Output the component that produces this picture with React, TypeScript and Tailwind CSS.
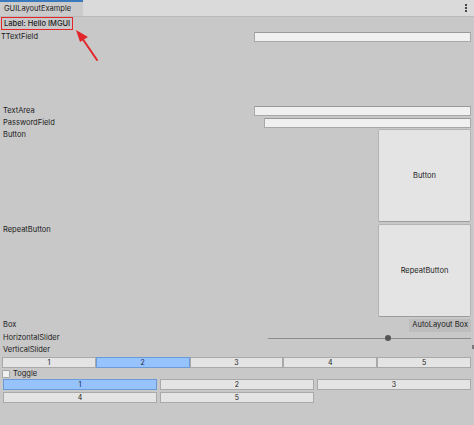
import React from 'react';

const font = { fontFamily: 'Inter, "Noto Sans", sans-serif' };

const Label = ({ children }: { children: React.ReactNode }) => (
  <span className="pl-[3px] text-[7.5px] leading-[12px] text-[#1c1c1c]">{children}</span>
);

const Field = ({ w }: { w: string }) => (
  <div className={`${w} h-[10px] bg-[#f0f0f0] border border-[#a8a8a8] border-t-[#999] rounded-[1px]`} />
);

const BigButton = ({ label, h }: { label: string; h: string }) => (
  <div className={`w-[93px] ${h} bg-[#e4e4e4] border border-[#b4b4b4] border-b-[#9c9c9c] rounded-[2px] flex items-center justify-center text-[7.5px] text-[#1c1c1c]`}>
    {label}
  </div>
);

const SegButton = ({ label, active }: { label: string; active?: boolean }) => (
  <div
    className={`flex-1 h-[11px] flex items-center justify-center text-[7px] leading-none border ${
      active
        ? 'bg-[#96c3fb] border-[#6b9ad8] text-[#1c2a44]'
        : 'bg-[#e4e4e4] border-[#a9a9a9] text-[#1c1c1c]'
    }`}
  >
    {label}
  </div>
);

export default function App() {
  return (
    <div className="relative w-[474px] h-[425px] bg-[#c8c8c8] overflow-hidden" style={font}>
      {/* window tab bar */}
      <div className="h-[17px] bg-[#dadada] border-b border-[#b9b9b9] flex items-stretch justify-between">
        <div className="w-[83px] bg-[#cbcbcb] border-t-2 border-[#3a79bb] flex items-center pl-[4px] text-[7.5px] text-[#1c1c1c]">
          GUILayoutExample
        </div>
        <div className="flex flex-col items-center justify-center gap-[1px] pr-[7px]">
          <span className="w-[2px] h-[2px] bg-[#444]" />
          <span className="w-[2px] h-[2px] bg-[#444]" />
          <span className="w-[2px] h-[2px] bg-[#444]" />
        </div>
      </div>

      {/* label */}
      <div className="h-[14px] flex items-start">
        <span className="ml-[1px] px-[2px] h-[13px] flex items-center border-[1.5px] border-[#e3262b] text-[7.5px] font-medium text-[#1c1c1c]">
          Label: Hello IMGUI
        </span>
      </div>

      <div className="h-[12px] flex items-center justify-between pr-[3px]">
        <span className="pl-[1px] text-[7.5px] leading-[12px] text-[#1c1c1c]">TTextField</span>
        <Field w="w-[217px]" />
      </div>

      <div className="h-[62px]" />

      <div className="h-[12px] flex items-center justify-between pr-[3px]">
        <Label>TextArea</Label>
        <Field w="w-[217px]" />
      </div>

      <div className="h-[12px] flex items-center justify-between pr-[3px]">
        <Label>PasswordField</Label>
        <Field w="w-[207px]" />
      </div>

      <div className="h-[94px] flex items-start justify-between pr-[3px]">
        <Label>Button</Label>
        <BigButton label="Button" h="h-[93px]" />
      </div>

      <div className="h-[95px] flex items-start justify-between pr-[3px] pt-[1px]">
        <Label>RepeatButton</Label>
        <BigButton label="RepeatButton" h="h-[93px]" />
      </div>

      <div className="h-[14px] flex items-center justify-between pr-[3px]">
        <Label>Box</Label>
        <div className="h-[13px] px-[3px] bg-[#bdbdbd] flex items-center text-[7.5px] text-[#1c1c1c]">
          AutoLayout Box
        </div>
      </div>

      <div className="h-[12px] flex items-center justify-between pr-[3px]">
        <Label>HorizontalSlider</Label>
        <div className="relative w-[203px] h-[6px] flex items-center">
          <div className="w-full h-[1px] bg-[#8c8c8c]" />
          <div className="absolute left-[117px] top-0 w-[6px] h-[6px] rounded-full bg-[#555]" />
        </div>
      </div>

      <div className="h-[12px] flex items-center justify-between">
        <Label>VerticalSlider</Label>
        <div className="w-[2px] h-[4px] bg-[#7a7a7a] mb-[6px]" />
      </div>

      {/* toolbar */}
      <div className="h-[12px] flex items-center pl-[2px] pr-[3px]">
        <SegButton label="1" />
        <SegButton label="2" active />
        <SegButton label="3" />
        <SegButton label="4" />
        <SegButton label="5" />
      </div>

      {/* toggle */}
      <div className="h-[11px] flex items-center pl-[2px] gap-[3px]">
        <div className="w-[8px] h-[8px] bg-[#f0f0f0] border border-[#a5a5a5] rounded-[1px]" />
        <span className="text-[7.5px] text-[#1c1c1c]">Toggle</span>
      </div>

      {/* selection grid */}
      <div className="grid grid-cols-3 gap-x-[3px] gap-y-[2px] pl-[3px] pr-[3px]">
        <SegButton label="1" active />
        <SegButton label="2" />
        <SegButton label="3" />
        <SegButton label="4" />
        <SegButton label="5" />
      </div>

      {/* annotation arrow */}
      <svg className="absolute left-0 top-0" width="474" height="425" viewBox="0 0 474 425">
        <line x1="97" y1="60" x2="82" y2="38" stroke="#e3262b" strokeWidth="2" strokeLinecap="round" />
        <polygon points="76,30 88,37 80,42" fill="#e3262b" />
      </svg>
    </div>
  );
}
